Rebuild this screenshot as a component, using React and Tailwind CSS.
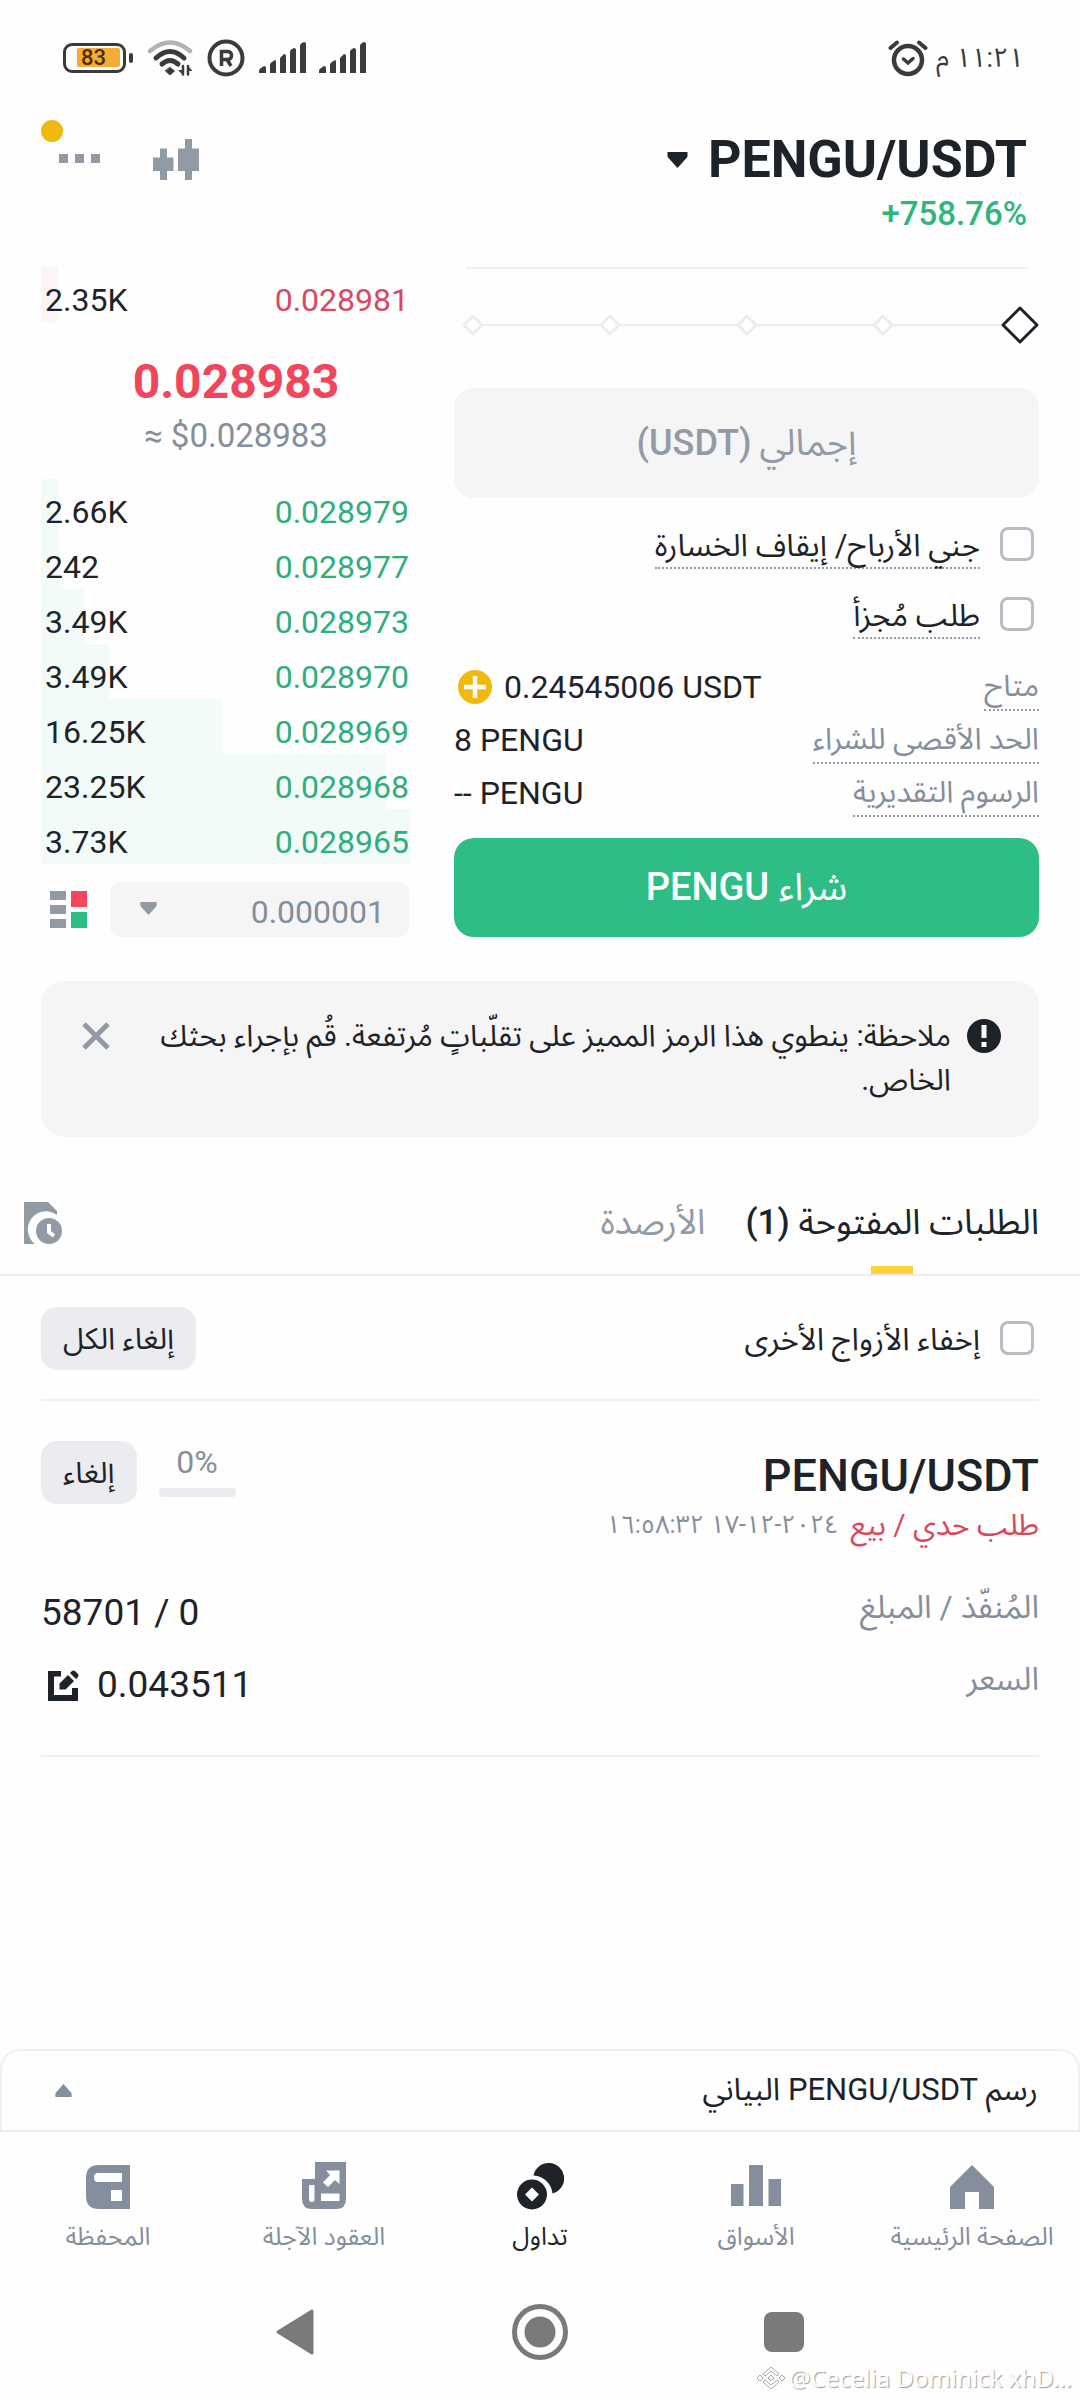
import React from "react";

const asks = [{ amount: "2.35K", price: "0.028981", depth: 17 }];
const bids = [
  { amount: "2.66K", price: "0.028979", depth: 18 },
  { amount: "242", price: "0.028977", depth: 19 },
  { amount: "3.49K", price: "0.028973", depth: 43 },
  { amount: "3.49K", price: "0.028970", depth: 68 },
  { amount: "16.25K", price: "0.028969", depth: 181 },
  { amount: "23.25K", price: "0.028968", depth: 344 },
  { amount: "3.73K", price: "0.028965", depth: 370 },
];
const MAX_DEPTH = 370;

function depthFill(depth, color) {
  const stop = `${(depth / MAX_DEPTH) * 100}%`;
  return { backgroundImage: `linear-gradient(to right, ${color} ${stop}, transparent ${stop})` };
}

function BookTable({ label, rows, color, priceClass }) {
  return (
    <table dir="ltr" aria-label={label} className="w-full border-collapse text-[32px] leading-9">
      <tbody>
        {rows.map((r) => (
          <tr key={r.price} style={depthFill(r.depth, color)}>
            <td className="h-[55px] pt-[15px] pb-1 pl-1 text-left text-[#1e2329]">{r.amount}</td>
            <td className={`h-[55px] pt-[15px] pb-1 pr-[2px] text-right ${priceClass}`}>{r.price}</td>
          </tr>
        ))}
      </tbody>
    </table>
  );
}

function Caret({ className, up }) {
  return (
    <svg viewBox="0 0 20 16" className={className} fill="currentColor" aria-hidden="true">
      {up ? <path d="M10 0 19 10Q20 11 20 12V16H0V12Q0 11 1 10Z" /> : <path d="M0 0H20V4Q20 5 19 6L10 16 1 6Q0 5 0 4Z" />}
    </svg>
  );
}

function Signal() {
  return (
    <svg viewBox="0 0 48 32" className="h-8 w-12" fill="#3b3b3b" aria-hidden="true">
      <path d="M0 29Q0 27 2 26L5 24Q7 24 7 26V31H0ZM11 23Q11 21 13 20L16 18Q17 18 17 20V31H11ZM21 17Q21 15 23 14L25 12Q27 12 27 14V31H21ZM31 10Q31 8 33 7L35 6Q37 6 37 8V31H31ZM41 4Q41 2 43 1L45 0Q47 0 47 2V31H41Z" />
    </svg>
  );
}

function StatusBar() {
  return (
    <div dir="ltr" className="flex h-[115px] items-center justify-between pr-14 pl-[63px]">
      <div className="flex items-center">
        <div className="flex items-center gap-[3px]" aria-label="83%">
          <div className="flex h-[30px] w-[63px] items-center justify-center rounded-[9px] border-[3px] border-[#3b3b3b]">
            <span className="ml-2 h-[19px] w-[43px] rounded-[2px] bg-[#f5ab35] pl-1 text-[22px] leading-5 font-medium text-[#4a2f0a]">83</span>
          </div>
          <div className="h-[10px] w-1 rounded-[2px] bg-[#3b3b3b]" />
        </div>
        <svg viewBox="0 0 46 36" className="ml-[14px] h-9 w-[46px]" fill="none" strokeLinecap="round" aria-hidden="true">
          <path d="M3 11Q23 -6 43 11" stroke="#b3b3b3" strokeWidth="4.5" />
          <path d="M9 18Q23 5 37 18" stroke="#3b3b3b" strokeWidth="5" />
          <path d="M15 24Q23 17 31 24" stroke="#3b3b3b" strokeWidth="5" />
          <path d="M23 27.5 27.5 31 23 35 18.500 31Z" fill="#3b3b3b" stroke="#3b3b3b" strokeWidth="1" />
          <path d="M36 26V34.500M41 34.500V26" stroke="#3b3b3b" strokeWidth="2.500" />
          <path d="M31 30H36V35ZM41 26V31H45.500Z" fill="#3b3b3b" />
        </svg>
        <svg viewBox="0 0 38 38" className="ml-[14px] h-[38px] w-[38px]" aria-hidden="true">
          <circle cx="19" cy="19" r="16.500" fill="none" stroke="#3b3b3b" strokeWidth="4" />
          <path d="M14.500 27V12.500H20Q24.500 12.500 24.500 16.500T20 20.500H14.500M20 20.500 24 27" fill="none" stroke="#3b3b3b" strokeWidth="3.500" />
        </svg>
        <div className="ml-[14px] flex gap-3">
          <Signal />
          <Signal />
        </div>
      </div>
      <div className="flex items-center gap-2">
        <svg viewBox="0 0 40 38" className="h-[38px] w-10" fill="none" stroke="#3b3b3b" strokeLinecap="round" aria-hidden="true">
          <circle cx="20" cy="21" r="14" strokeWidth="4.500" />
          <path d="M15.500 20 20 24 25 19.500" strokeWidth="3.500" />
          <path d="M2.500 9 9 3.500M37.500 9 31 3.500" strokeWidth="4" />
        </svg>
        <span dir="rtl" className="text-[27px] leading-9 text-[#3b3b3b]">١١:٢١ م</span>
      </div>
    </div>
  );
}

function Header() {
  return (
    <header className="flex h-[152px] items-start justify-between pr-[53px] pl-[41px]">
      <div className="pt-[14px]">
        <button type="button" className="flex items-center gap-5 text-[#1e2329]">
          <h1 className="text-[52px] leading-[62px] font-bold">PENGU/USDT</h1>
          <Caret className="h-4 w-[21px]" />
        </button>
        <p dir="ltr" className="text-right text-[33px] leading-[46px] font-medium text-[#2eb67d]">+758.76%</p>
      </div>
      <div dir="ltr" className="flex pt-[23px] text-[#929aa5]">
        <button type="button" aria-label="المزيد" className="relative h-[42px] w-[60px]">
          <svg viewBox="0 0 60 42" className="h-[42px] w-[60px]" aria-hidden="true">
            <path d="M18 16h9v9h-9zM34 16h9v9h-9zM50 16h9v9h-9z" fill="currentColor" />
          </svg>
          <span className="absolute -top-[18px] left-0 h-[22px] w-[22px] rounded-full bg-[#f0b90b]" />
        </button>
        <button type="button" aria-label="الرسم البياني" className="ml-[52px]">
          <svg viewBox="0 0 46 41" className="h-[41px] w-[46px]" fill="currentColor" aria-hidden="true">
            <path d="M7 9.500h7v9h6.500v13.500H14v9H7v-9H0V18.500h7zM32 0h7v9.500h7V32h-7v9h-7v-9h-7V9.500h7z" />
          </svg>
        </button>
      </div>
    </header>
  );
}

function Diamond({ active }) {
  return (
    <span className="flex w-[38px] justify-center">
      {active ? (
        <svg viewBox="0 0 38 38" className="h-[38px] w-[38px]" fill="#fff" stroke="#1e2329" strokeWidth="3" strokeLinejoin="round" aria-hidden="true">
          <path d="M19 2 36 19 19 36 2 19Z" />
        </svg>
      ) : (
        <svg viewBox="0 0 22 22" className="h-[22px] w-[22px]" fill="#fff" stroke="#eaecef" strokeWidth="3" strokeLinejoin="round" aria-hidden="true">
          <path d="M11 2 20 11 11 20 2 11Z" />
        </svg>
      )}
    </span>
  );
}

function Check({ id, children, dotted }) {
  return (
    <div className="flex items-start gap-5 pr-[5px]">
      <input
        id={id}
        type="checkbox"
        className="mt-[2px] h-[34px] w-[34px] appearance-none rounded-lg border-[3px] border-[#b7bdc6] bg-white checked:bg-[#1e2329]"
      />
      <label
        htmlFor={id}
        className={
          dotted
            ? "border-b-2 border-dotted border-[#929aa5] text-[31px] leading-[42px] text-[#1e2329]"
            : "text-[31px] leading-[42px] text-[#1e2329]"
        }
      >
        {children}
      </label>
    </div>
  );
}

function Info({ label, children }) {
  return (
    <div className="flex h-[53px] items-start justify-between">
      <dt className="border-b-2 border-dotted border-[#929aa5] text-[30px] leading-[46px] text-[#848e9c]">{label}</dt>
      <dd dir="ltr" className="flex items-center gap-3 text-[32px] leading-[48px] text-[#1e2329]">{children}</dd>
    </div>
  );
}

function TradePanel() {
  return (
    <section className="grid grid-cols-[585fr_43fr_370fr] px-[41px]">
      <form className="flex flex-col" onSubmit={(e) => e.preventDefault()}>
        <div className="mx-3 border-t-2 border-[#eef0f2]" />
        <div className="relative mt-[37px] flex h-[38px] items-center justify-between">
          <div className="absolute right-5 left-5 border-t-2 border-[#eaecef]" />
          <div className="relative flex w-full items-center justify-between">
            <Diamond active />
            <Diamond />
            <Diamond />
            <Diamond />
            <Diamond />
          </div>
          <input type="range" min="0" max="100" step="25" defaultValue="0" aria-label="النسبة" className="absolute inset-0 w-full opacity-0" />
        </div>
        <div className="relative mt-[44px]">
          <input
            id="total"
            type="text"
            placeholder=" "
            className="peer block h-[110px] w-full rounded-[20px] bg-[#f5f5f5] text-center text-[36px] text-[#1e2329]"
          />
          <label
            htmlFor="total"
            className="absolute inset-0 hidden items-center justify-center gap-2 text-[36px] text-[#929aa5] peer-placeholder-shown:flex"
          >
            <span>إجمالي</span>
            <span dir="ltr" className="font-medium">(USDT)</span>
          </label>
        </div>
        <div className="mt-[27px] flex flex-col gap-[26px]">
          <Check id="tpsl" dotted>جني الأرباح/ إيقاف الخسارة</Check>
          <Check id="iceberg" dotted>طلب مُجزأ</Check>
        </div>
        <dl className="mt-6">
          <Info label="متاح">
            <button type="button" aria-label="إيداع" className="ml-1">
              <svg viewBox="0 0 34 34" className="h-[34px] w-[34px]" aria-hidden="true">
                <circle cx="17" cy="17" r="17" fill="#f0b90b" />
                <path d="M17 6V28M6 17H28" stroke="#fff" strokeWidth="4.500" />
              </svg>
            </button>
            <span>0.24545006 USDT</span>
          </Info>
          <Info label="الحد الأقصى للشراء">8 PENGU</Info>
          <Info label="الرسوم التقديرية">-- PENGU</Info>
        </dl>
        <button type="submit" className="mt-4 h-[99px] rounded-[20px] bg-[#2ebd85] text-[38px] text-white">
          شراء <span className="font-medium">PENGU</span>
        </button>
      </form>
      <div />
      <div>
        <BookTable label="أوامر البيع" rows={asks} color="#fff4f5" priceClass="text-[#d9485f]" />
        <div dir="ltr" className="flex h-[157px] flex-col items-center pt-[30px] pl-5">
          <strong className="text-[48px] leading-[60px] font-bold text-[#f0465c]">0.028983</strong>
          <span className="text-[33px] leading-[48px] text-[#848e9c]">≈ $0.028983</span>
        </div>
        <BookTable label="أوامر الشراء" rows={bids} color="#f2fbf8" priceClass="text-[#2fae7c]" />
        <div dir="ltr" className="mt-[18px] flex items-center gap-[23px] pr-[2px] pl-[9px]">
          <button type="button" aria-label="عرض دفتر الأوامر">
            <svg viewBox="0 0 37 37" className="h-[37px] w-[37px]" aria-hidden="true">
              <path d="M0 0h16v9H0zM0 14h16v9H0zM0 28h16v9H0z" fill="#929aa5" />
              <path d="M21 0h16v16H21z" fill="#f6465d" />
              <path d="M21 21h16v16H21z" fill="#2ebd85" />
            </svg>
          </button>
          <div className="relative flex-1">
            <select
              aria-label="دقة السعر"
              className="h-[55px] w-full appearance-none rounded-[10px] bg-[#f5f5f5] pt-1 pr-6 text-right text-[32px] text-[#848e9c] [text-align-last:right]"
            >
              <option>0.000001</option>
            </select>
            <Caret className="pointer-events-none absolute top-5 left-[30px] h-[13px] w-[17px] text-[#929aa5]" />
          </div>
        </div>
      </div>
    </section>
  );
}

function Notice() {
  return (
    <aside className="mx-[41px] mt-[44px] flex h-[156px] items-start rounded-[24px] bg-[#f5f5f5] pt-[33px] pr-[38px] pl-[41px]">
      <svg viewBox="0 0 34 34" className="mt-[5px] h-[34px] w-[34px] shrink-0" aria-hidden="true">
        <circle cx="17" cy="17" r="17" fill="#1e2329" />
        <path d="M14.500 6h5v13h-5zM14.500 23h5v5h-5z" fill="#fff" />
      </svg>
      <p className="mr-4 flex-1 text-[30px] leading-[44px] text-[#1e2329]">
        ملاحظة: ينطوي هذا الرمز المميز على تقلّباتٍ مُرتفعة. قُم بإجراء بحثك الخاص.
      </p>
      <button type="button" aria-label="إغلاق" className="mt-2 mr-10">
        <svg viewBox="0 0 28 28" className="h-7 w-7" stroke="#929aa5" strokeWidth="5" aria-hidden="true">
          <path d="M2 2 26 26M26 2 2 26" />
        </svg>
      </button>
    </aside>
  );
}

function Tabs() {
  return (
    <div className="mt-[54px] flex h-[85px] items-start justify-between border-b-2 border-[#eaecef] pr-[41px] pl-6">
      <div role="tablist" className="flex h-full gap-10 text-[35px] leading-[62px]">
        <button type="button" role="tab" aria-selected="true" className="relative h-full pb-5 text-[#1e2329]">
          الطلبات المفتوحة <span className="font-medium">(1)</span>
          <span className="absolute bottom-0 left-1/2 h-2 w-[42px] -translate-x-1/2 bg-[#fcd535]" />
        </button>
        <button type="button" role="tab" aria-selected="false" className="h-full pb-5 text-[#929aa5]">الأرصدة</button>
      </div>
      <button type="button" aria-label="سجل الطلبات" className="mt-[11px]">
        <svg viewBox="0 0 38 42" className="h-[42px] w-[38px]" aria-hidden="true">
          <path d="M0 0H24L33 9V13A16 16 0 0 0 11 42H0Z" fill="#929aa5" />
          <circle cx="25" cy="29" r="13" fill="#929aa5" />
          <path d="M25 22V30L30 34" fill="none" stroke="#fff" strokeWidth="4" />
        </svg>
      </button>
    </div>
  );
}

function Orders() {
  return (
    <section className="px-[41px]">
      <div className="flex h-[125px] items-start justify-between border-b-2 border-[#eef0f2] pt-[31px]">
        <div className="pt-3">
          <Check id="hide-pairs">إخفاء الأزواج الأخرى</Check>
        </div>
        <button type="button" className="h-[63px] rounded-2xl bg-[#eaecef] px-[22px] text-[30px] text-[#1e2329]">إلغاء الكل</button>
      </div>
      <article className="border-b-2 border-[#eef0f2] pt-10 pb-[34px]">
        <div className="flex items-start justify-between">
          <div>
            <h2 className="pt-2 text-[45px] leading-[54px] font-medium text-[#1e2329]">PENGU/USDT</h2>
            <p className="flex gap-3 text-[30px] leading-[44px]">
              <span className="text-[#d9485f]">طلب حدي / بيع</span>
              <bdo dir="ltr" className="text-[25px] text-[#848e9c]">١٦:٥٨:٣٢ ١٧-١٢-٢٠٢٤</bdo>
            </p>
          </div>
          <div dir="ltr" className="flex items-start gap-[22px]">
            <button type="button" className="h-[63px] rounded-2xl bg-[#eaecef] px-[22px] text-[30px] text-[#1e2329]">إلغاء</button>
            <div className="w-[77px]">
              <p className="text-center text-[32px] leading-[42px] text-[#848e9c]">0%</p>
              <div className="mt-[5px] h-[9px] rounded-[4px] bg-[#eaecef]" />
            </div>
          </div>
        </div>
        <dl className="pt-[30px]">
          <div className="flex h-[72px] items-start justify-between">
            <dt className="text-[32px] leading-[60px] text-[#848e9c]">المُنفّذ / المبلغ</dt>
            <dd dir="ltr" className="text-[37px] leading-[72px] text-[#1e2329]">58701 / 0</dd>
          </div>
          <div className="flex h-[72px] items-start justify-between">
            <dt className="text-[32px] leading-[60px] text-[#848e9c]">السعر</dt>
            <dd dir="ltr" className="flex items-center gap-[18px] pl-[7px] text-[37px] leading-[72px] text-[#1e2329]">
              <button type="button" aria-label="تعديل السعر">
                <svg viewBox="0 0 31 31" className="h-[31px] w-[31px]" fill="#1e2329" aria-hidden="true">
                  <path d="M0 1H13V6.500H6V25H24V18H30V31H0Z" />
                  <path d="M11.500 13.500 20 5 26 11 17.500 19.500H11.500ZM22 3 24 1Q25.500 0 27 1L30 4Q31 5.500 30 7L28 9Z" />
                </svg>
              </button>
              0.043511
            </dd>
          </div>
        </dl>
      </article>
    </section>
  );
}

const icons = {
  home: (
    <svg viewBox="0 0 44 48" className="h-12 w-11" fill="currentColor" aria-hidden="true">
      <path d="M22 3 44 25V47H29V30H15V47H0V25Z" />
    </svg>
  ),
  markets: (
    <svg viewBox="0 0 50 48" className="h-12 w-[50px]" fill="currentColor" aria-hidden="true">
      <path d="M0 22h12.500v22H0zM18 3h14v41H18zM37.500 17H50v27H37.500z" />
    </svg>
  ),
  trade: (
    <svg viewBox="0 0 48 48" className="h-12 w-12" fill="currentColor" aria-hidden="true">
      <path d="M17.500 13.500A15.500 15.500 0 1 1 36.500 31.500A20 20 0 0 0 17.500 13.500Z" />
      <path fillRule="evenodd" d="M16 17.500A15 15 0 1 0 16 47.500A15 15 0 1 0 16 17.500ZM16 25.500 23 32.500 16 39.500 9 32.500Z" />
    </svg>
  ),
  futures: (
    <svg viewBox="0 0 44 48" className="h-12 w-11" aria-hidden="true">
      <path d="M13 0H44V37Q44 47 34 47H10Q0 47 0 37V17H13Z" fill="currentColor" />
      <path d="M7 23H12.500V37Q12.500 40 9.750 40T7 37ZM19 31.500H37.500V39H19ZM24 8.500H37.500V22L33 18 26 25 21 20.500 28 13Z" fill="#fff" />
    </svg>
  ),
  wallet: (
    <svg viewBox="0 0 44 48" className="h-12 w-11" aria-hidden="true">
      <path d="M13 3H44V47H13Q0 47 0 34V16Q0 3 13 3Z" fill="currentColor" />
      <path d="M12 11H36V20H12Q8 20 8 15.500T12 11ZM25 28H36V39H25Z" fill="#fff" />
    </svg>
  ),
};

const navItems = [
  { key: "home", label: "الصفحة الرئيسية" },
  { key: "markets", label: "الأسواق" },
  { key: "trade", label: "تداول", active: true },
  { key: "futures", label: "العقود الآجلة" },
  { key: "wallet", label: "المحفظة" },
];

function BottomBars() {
  return (
    <footer className="mt-auto">
      <button
        type="button"
        className="flex h-[81px] w-full items-center justify-between rounded-t-[20px] border-2 border-b-0 border-[#eef0f2] pr-[40px] pl-[53px] text-[31px] text-[#1e2329]"
      >
        <span>رسم PENGU/USDT البياني</span>
        <Caret up className="h-[13px] w-[17px] text-[#848e9c]" />
      </button>
      <nav className="grid grid-cols-5 border-t-2 border-[#eaecef] pt-[30px]">
        {navItems.map((n) => (
          <a
            key={n.key}
            href="#"
            aria-current={n.active ? "page" : undefined}
            className={
              n.active
                ? "flex flex-col items-center text-[25px] leading-[54px] whitespace-nowrap text-[#1e2329]"
                : "flex flex-col items-center text-[25px] leading-[54px] whitespace-nowrap text-[#848e9c]"
            }
          >
            {icons[n.key]}
            {n.label}
          </a>
        ))}
      </nav>
      <div dir="ltr" className="relative flex h-[136px] items-start justify-center gap-[182px] pt-10">
        <button type="button" aria-label="رجوع" className="flex h-[56px] w-[54px] items-center">
          <svg viewBox="0 0 38 46" className="h-[46px] w-[38px]" fill="#7a7a7a" stroke="#7a7a7a" strokeWidth="3" strokeLinejoin="round" aria-hidden="true">
            <path d="M2 23 36 2V44Z" />
          </svg>
        </button>
        <button type="button" aria-label="الشاشة الرئيسية">
          <svg viewBox="0 0 56 56" className="h-14 w-14" aria-hidden="true">
            <circle cx="28" cy="28" r="25.500" fill="none" stroke="#7a7a7a" strokeWidth="5" />
            <circle cx="28" cy="28" r="15.500" fill="#7a7a7a" />
          </svg>
        </button>
        <button type="button" aria-label="التطبيقات الأخيرة" className="flex h-[56px] w-[54px] items-center justify-end">
          <span className="h-10 w-10 rounded-lg bg-[#7a7a7a]" />
        </button>
        <div className="absolute right-2 bottom-1 flex items-center gap-1 font-['Noto_Sans',sans-serif] text-[24px] leading-9 whitespace-nowrap text-white [text-shadow:1px_1px_1px_#9a9a9a]">
          <svg viewBox="0 0 28 24" className="h-6 w-7" fill="none" stroke="#a5a5a5" strokeWidth="1" aria-hidden="true">
            <path d="M6 8 14 1 22 8 20 10 14 5 8 10ZM0 12 3 9 6 12 3 15ZM11 12 14 9 17 12 14 15ZM22 12 25 9 28 12 25 15ZM6 16 8 14 14 19 20 14 22 16 14 23Z" />
          </svg>
          @Cecelia Dominick xhD...
        </div>
      </div>
    </footer>
  );
}

export default function App() {
  return (
    <main
      dir="rtl"
      lang="ar"
      className="flex min-h-screen flex-col bg-[#fefefe] font-['Roboto','Noto_Sans_Arabic','Noto_Sans',sans-serif]"
    >
      <StatusBar />
      <Header />
      <TradePanel />
      <Notice />
      <Tabs />
      <Orders />
      <BottomBars />
    </main>
  );
}
